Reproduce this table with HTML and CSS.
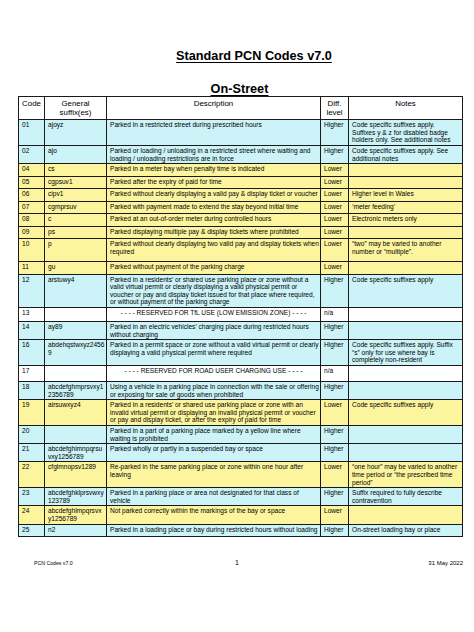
FILE: index.html
```html
<!DOCTYPE html>
<html lang="en">
<head>
<meta charset="utf-8">
<title>Standard PCN Codes v7.0</title>
<link rel="stylesheet" href="styles.css">
</head>
<body>
<div class="page">
  <h1 class="title">Standard PCN Codes v7.0</h1>
  <h2 class="subtitle">On-Street</h2>
  <table class="codes">
    <colgroup>
      <col class="c-code">
      <col class="c-suf">
      <col class="c-desc">
      <col class="c-diff">
      <col class="c-notes">
    </colgroup>
    <thead>
      <tr class="head">
        <th>Code</th>
        <th>General<br>suffix(es)</th>
        <th>Description</th>
        <th>Diff.<br>level</th>
        <th>Notes</th>
      </tr>
    </thead>
    <tbody>
      <tr class="cyan"><td>01</td><td>ajoyz</td><td>Parked in a restricted street during prescribed hours</td><td>Higher</td><td>Code specific suffixes apply.<br>Suffixes y &amp; z for disabled badge<br>holders only. See additional notes</td></tr>
      <tr class="cyan"><td>02</td><td>ajo</td><td>Parked or loading / unloading in a restricted street where waiting and<br>loading / unloading restrictions are in force</td><td>Higher</td><td>Code specific suffixes apply. See<br>additional notes</td></tr>
      <tr class="yellow"><td>04</td><td>cs</td><td>Parked in a meter bay when penalty time is indicated</td><td>Lower</td><td></td></tr>
      <tr class="yellow"><td>05</td><td>cgpsuv1</td><td>Parked after the expiry of paid for time</td><td>Lower</td><td></td></tr>
      <tr class="yellow"><td>06</td><td>cipv1</td><td>Parked without clearly displaying a valid pay &amp; display ticket or voucher</td><td>Lower</td><td>Higher level in Wales</td></tr>
      <tr class="yellow"><td>07</td><td>cgmprsuv</td><td>Parked with payment made to extend the stay beyond initial time</td><td>Lower</td><td>‘meter feeding’</td></tr>
      <tr class="yellow"><td>08</td><td>c</td><td>Parked at an out-of-order meter during controlled hours</td><td>Lower</td><td>Electronic meters only</td></tr>
      <tr class="yellow"><td>09</td><td>ps</td><td>Parked displaying multiple pay &amp; display tickets where prohibited</td><td>Lower</td><td></td></tr>
      <tr class="yellow tall"><td>10</td><td>p</td><td>Parked without clearly displaying two valid pay and display tickets when<br>required</td><td>Lower</td><td>“two” may be varied to another<br>number or “multiple”.</td></tr>
      <tr class="yellow"><td>11</td><td>gu</td><td>Parked without payment of the parking charge</td><td>Lower</td><td></td></tr>
      <tr class="cyan"><td>12</td><td>arstuwy4</td><td>Parked in a residents’ or shared use parking place or zone without a<br>valid virtual permit or clearly displaying a valid physical permit or<br>voucher or pay and display ticket issued for that place where required,<br>or without payment of the parking charge</td><td>Higher</td><td>Code specific suffixes apply</td></tr>
      <tr class="white reserved"><td>13</td><td></td><td class="centre">- - - - RESERVED FOR TfL USE (LOW EMISSION ZONE) - - - -</td><td>n/a</td><td></td></tr>
      <tr class="cyan"><td>14</td><td>ay89</td><td>Parked in an electric vehicles’ charging place during restricted hours<br>without charging</td><td>Higher</td><td></td></tr>
      <tr class="cyan"><td>16</td><td>abdehqstwxyz2456<br>9</td><td>Parked in a permit space or zone without a valid virtual permit or clearly<br>displaying a valid physical permit where required</td><td>Higher</td><td>Code specific suffixes apply. Suffix<br>“s” only for use where bay is<br>completely non-resident</td></tr>
      <tr class="white reserved2"><td>17</td><td></td><td class="centre">- - - - RESERVED FOR ROAD USER CHARGING USE - - - -</td><td>n/a</td><td></td></tr>
      <tr class="cyan"><td>18</td><td>abcdefghmprsvxy1<br>2356789</td><td>Using a vehicle in a parking place in connection with the sale or offering<br>or exposing for sale of goods when prohibited</td><td>Higher</td><td></td></tr>
      <tr class="yellow"><td>19</td><td>airsuwxyz4</td><td>Parked in a residents’ or shared use parking place or zone with an<br>invalid virtual permit or displaying an invalid physical permit or voucher<br>or pay and display ticket, or after the expiry of paid for time</td><td>Lower</td><td>Code specific suffixes apply</td></tr>
      <tr class="cyan"><td>20</td><td></td><td>Parked in a part of a parking place marked by a yellow line where<br>waiting is prohibited</td><td>Higher</td><td></td></tr>
      <tr class="cyan"><td>21</td><td>abcdefghimnpqrsu<br>vxy1256789</td><td>Parked wholly or partly in a suspended bay or space</td><td>Higher</td><td></td></tr>
      <tr class="yellow"><td>22</td><td>cfglmnopsv1289</td><td>Re-parked in the same parking place or zone within one hour after<br>leaving</td><td>Lower</td><td>“one hour” may be varied to another<br>time period or “the prescribed time<br>period”</td></tr>
      <tr class="cyan"><td>23</td><td>abcdefghklprsvwxy<br>123789</td><td>Parked in a parking place or area not designated for that class of<br>vehicle</td><td>Higher</td><td>Suffix required to fully describe<br>contravention</td></tr>
      <tr class="yellow"><td>24</td><td>abcdefghlmpqrsvx<br>y1256789</td><td>Not parked correctly within the markings of the bay or space</td><td>Lower</td><td></td></tr>
      <tr class="cyan"><td>25</td><td>n2</td><td>Parked in a loading place or bay during restricted hours without loading</td><td>Higher</td><td>On-street loading bay or place</td></tr>
    </tbody>
  </table>
  <footer class="footer">
    <span class="f-left">PCN Codes v7.0</span>
    <span class="f-mid">1</span>
    <span class="f-right">31 May 2022</span>
  </footer>
</div>
</body>
</html>
```

FILE: styles.css
```css
html, body {
  margin: 0;
  padding: 0;
  background: #ffffff;
}

body {
  font-family: "Liberation Sans", Arial, sans-serif;
  color: #000000;
}

.page {
  width: 474px;
  height: 632px;
  padding-top: 49px;
  box-sizing: border-box;
}

.title {
  margin: 0;
  padding-left: 34px;
  font-size: 12.7px;
  line-height: 15px;
  font-weight: bold;
  text-align: center;
  text-decoration: underline;
  text-decoration-thickness: 1px;
  text-underline-offset: 1.5px;
  color: #000000;
}

.subtitle {
  margin: 19px 0 0 0;
  padding-left: 5px;
  font-size: 12.7px;
  line-height: 13px;
  font-weight: bold;
  text-align: center;
  text-decoration: underline;
  text-decoration-thickness: 1px;
  text-underline-offset: 1.5px;
  color: #000000;
}

.codes {
  margin-left: 18px;
  margin-top: 0;
  width: 444px;
  table-layout: fixed;
  border-collapse: collapse;
  border: 1.5px solid #111111;
}

.c-code { width: 26px; }
.c-suf { width: 62px; }
.c-desc { width: 214px; }
.c-diff { width: 28px; }
.c-notes { width: 114px; }

.codes th,
.codes td {
  border: 1px solid #1a1a1a;
  vertical-align: top;
  text-align: left;
  white-space: nowrap;
  overflow: visible;
  color: #000000;
}

.codes th {
  font-size: 7.9px;
  line-height: 9.6px;
  font-weight: normal;
  text-align: center;
  padding: 1.5px 1px 1.5px 1px;
  background: #ffffff;
}

.codes td {
  font-size: 6.6px;
  line-height: 7.6px;
  padding: 1px 1px 1px 3px;
}

.codes tbody tr {
  height: 12.5px;
}

.codes tbody tr.tall {
  height: 23px;
}

.codes tbody tr.reserved {
  height: 14px;
}

.codes tbody tr.reserved2 {
  height: 16px;
}

.codes td.centre {
  text-align: center;
  padding-left: 1px;
}

.cyan td {
  background: #cbf3f8;
}

.yellow td {
  background: #fcf59e;
}

.white td {
  background: #ffffff;
}

.footer {
  display: grid;
  grid-template-columns: 201px 12px 1fr;
  align-items: center;
  margin-top: 22px;
  padding: 0 11px 0 34px;
  height: 8px;
  line-height: 8px;
  color: #000000;
}

.f-left {
  font-size: 5.2px;
}

.f-mid {
  font-size: 7px;
}

.f-right {
  font-size: 6px;
  text-align: right;
}
```
